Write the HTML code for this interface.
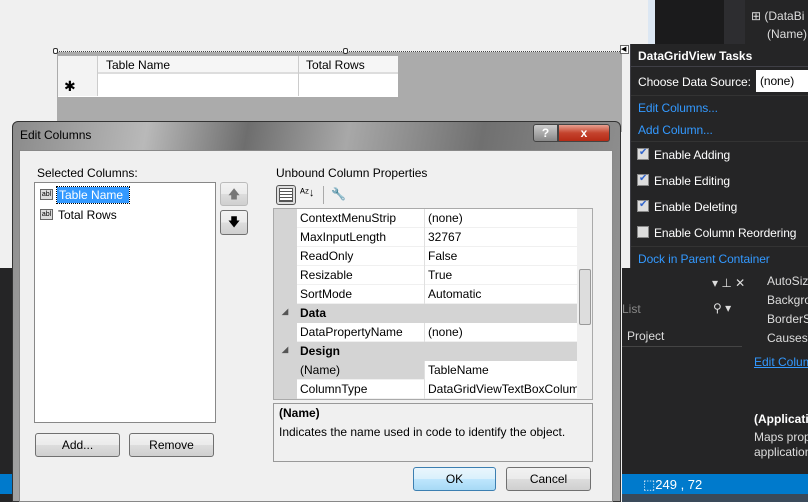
<!DOCTYPE html>
<html><head><style>
*{box-sizing:border-box;margin:0;padding:0}
body{width:808px;height:502px;overflow:hidden;position:relative;background:#f0f0f0;font-family:"Liberation Sans",sans-serif;font-size:12px;color:#000}
.a{position:absolute}
.dark{background:#1e1e1e}
.t{position:absolute;white-space:nowrap}
.btn{position:absolute;border:1px solid #707070;border-radius:3px;background:linear-gradient(#f2f2f2,#ebebeb 50%,#dddddd 51%,#cfcfcf);text-align:center;line-height:22px}
.row{position:absolute;left:23px;width:280px;height:19px;border-bottom:1px solid #f0f0f0;background:#fff}
.row span{position:absolute;top:2px}
.cat{position:absolute;left:0;width:303px;height:19px;background:#d4d4d4;font-weight:bold}
.lk{color:#3399ff}
.cb{position:absolute;left:637px;width:12px;height:12px;border:1px solid #888;background:#ddd}
.p{font-size:12px;letter-spacing:-0.1px}
</style></head><body>
<!-- designer surface -->
<div class="a" style="left:648px;top:0;width:7px;height:44px;background:#dce7f3"></div>
<div class="a" style="left:57px;top:52px;width:565px;height:80px;background:#ababab"></div>
<div class="a" style="left:55px;top:51px;width:567px;height:0;border-top:1px dotted #444"></div>
<div class="a" style="left:53px;top:48px;width:5px;height:6px;border:1px solid #333;background:#fff;border-radius:2px"></div>
<div class="a" style="left:343px;top:48px;width:5px;height:6px;border:1px solid #333;background:#fff;border-radius:2px"></div>
<div class="a" style="left:620px;top:45px;width:9px;height:9px;background:#fff;border:1px solid #666;font-size:7px;line-height:7px">◀</div>
<!-- grid -->
<div class="a" style="left:58px;top:56px;width:340px;height:41px;background:#fff"></div>
<div class="a" style="left:58px;top:56px;width:40px;height:40px;background:#f3f3f3;border-right:1px solid #ccc"></div>
<div class="a" style="left:98px;top:56px;width:300px;height:18px;background:#f6f6f6;border-bottom:2px solid #ddd"></div>
<div class="a" style="left:298px;top:56px;width:1px;height:40px;background:#ccc"></div>
<div class="t" style="left:106px;top:58px">Table Name</div>
<div class="t" style="left:306px;top:58px">Total Rows</div>
<div class="t" style="left:64px;top:78px;font-size:14px">✱</div>
<!-- right dark IDE -->
<div class="a dark" style="left:655px;top:0;width:153px;height:44px;background:#2d2d30"></div>
<div class="a" style="left:655px;top:0;width:69px;height:44px;background:#1b1b1c"></div>
<div class="a" style="left:745px;top:0;width:63px;height:44px;background:#252526"></div>
<div class="t" style="left:751px;top:9px;color:#ddd">⊞ (DataBi</div>
<div class="t" style="left:767px;top:27px;color:#ddd">(Name)</div>
<div class="a dark" style="left:622px;top:268px;width:186px;height:234px;background:#252526"></div>
<div class="a" style="left:0;top:268px;width:12px;height:234px;background:#252526"></div>
<div class="a" style="left:0;top:474px;width:12px;height:20px;background:#007acc"></div>
<div class="a" style="left:622px;top:474px;width:186px;height:20px;background:#007acc"></div>
<div class="t" style="left:643px;top:477px;color:#fff;font-size:13px">⬚249 , 72</div>
<div class="a" style="left:622px;top:494px;width:186px;height:8px;background:#3a4a5a"></div>
<div class="t" style="left:622px;top:302px;color:#888">List</div>
<div class="t" style="left:627px;top:329px;color:#ddd">Project</div>
<div class="a" style="left:622px;top:346px;width:120px;height:1px;background:#444"></div>
<div class="t" style="left:712px;top:276px;color:#ddd">▾ ⊥ ✕</div>
<div class="t" style="left:713px;top:301px;color:#ddd">⚲ ▾</div>
<div class="a" style="left:750px;top:268px;width:58px;height:80px;background:#252526"></div>
<div class="t" style="left:767px;top:274px;color:#ddd">AutoSiz</div>
<div class="t" style="left:767px;top:293px;color:#ddd">Backgro</div>
<div class="t" style="left:767px;top:312px;color:#ddd">BorderS</div>
<div class="t" style="left:767px;top:331px;color:#ddd">CausesV</div>
<div class="t lk" style="left:754px;top:355px;text-decoration:underline">Edit Colum</div>
<div class="t" style="left:754px;top:412px;color:#fff;font-weight:bold">(Applicatio</div>
<div class="t" style="left:754px;top:430px;color:#ddd">Maps prop</div>
<div class="t" style="left:754px;top:445px;color:#ddd">application</div>
<!-- tasks popup -->
<div class="a" style="left:630px;top:44px;width:178px;height:224px;background:#252526;border-left:1px solid #3f3f46"></div>
<div class="t" style="left:638px;top:49px;color:#fff;font-weight:bold;font-size:12px">DataGridView Tasks</div>
<div class="a" style="left:631px;top:66px;width:177px;height:1px;background:#3f3f46"></div>
<div class="t p" style="left:638px;top:75px;color:#fff">Choose Data Source:</div>
<div class="a" style="left:756px;top:70px;width:52px;height:22px;background:#fff"></div>
<div class="t p" style="left:760px;top:74px">(none)</div>
<div class="a" style="left:631px;top:95px;width:177px;height:1px;background:#333"></div>
<div class="t lk p" style="left:638px;top:101px">Edit Columns...</div>
<div class="t lk p" style="left:638px;top:123px">Add Column...</div>
<div class="a" style="left:631px;top:141px;width:177px;height:1px;background:#333"></div>
<div class="cb" style="top:148px"></div><div class="t" style="left:639px;top:147px;color:#36c;font-size:10px">✔</div><div class="t p" style="left:654px;top:148px;color:#fff">Enable Adding</div>
<div class="cb" style="top:174px"></div><div class="t" style="left:639px;top:173px;color:#36c;font-size:10px">✔</div><div class="t p" style="left:654px;top:174px;color:#fff">Enable Editing</div>
<div class="cb" style="top:200px"></div><div class="t" style="left:639px;top:199px;color:#36c;font-size:10px">✔</div><div class="t p" style="left:654px;top:200px;color:#fff">Enable Deleting</div>
<div class="cb" style="top:226px"></div><div class="t p" style="left:654px;top:226px;color:#fff">Enable Column Reordering</div>
<div class="a" style="left:631px;top:246px;width:177px;height:1px;background:#333"></div>
<div class="t lk p" style="left:638px;top:252px">Dock in Parent Container</div>
<!-- dialog -->
<div class="a" style="left:12px;top:121px;width:609px;height:381px;border:1px solid #333;border-radius:6px 6px 0 0;background:linear-gradient(100deg,#8a8a8a,#b9b9b9 20%,#6e6e6e 35%,#a8a8a8 50%,#707070 70%,#9a9a9a)"></div>
<div class="t" style="left:20px;top:128px;color:#000">Edit Columns</div>
<div class="a" style="left:533px;top:124px;width:25px;height:18px;border:1px solid #444;border-radius:3px 0 0 3px;background:linear-gradient(#ccc,#888);color:#fff;text-align:center;font-weight:bold;line-height:16px">?</div>
<div class="a" style="left:558px;top:124px;width:52px;height:18px;border:1px solid #444;border-radius:0 3px 3px 0;background:linear-gradient(#e8a090,#c4432d 50%,#b52a15);color:#fff;text-align:center;font-weight:bold;line-height:16px">x</div>
<div class="a" style="left:19px;top:150px;width:594px;height:352px;background:#f0f0f0;border:1px solid #888"></div>
<div class="t" style="left:37px;top:166px">Selected Columns:</div>
<div class="a" style="left:34px;top:182px;width:182px;height:241px;background:#fff;border:1px solid #888"></div>
<div class="a" style="left:40px;top:189px;width:13px;height:11px;border:1px solid #666;background:#ddd;font-size:7px;line-height:9px;text-align:center">abl</div>
<div class="a" style="left:57px;top:187px;width:72px;height:16px;background:#3399ff;outline:1px dotted #000"></div>
<div class="t" style="left:59px;top:188px;color:#fff">Table Name</div>
<div class="a" style="left:40px;top:209px;width:13px;height:11px;border:1px solid #666;background:#ddd;font-size:7px;line-height:9px;text-align:center">abl</div>
<div class="t" style="left:58px;top:208px">Total Rows</div>
<div class="btn" style="left:220px;top:182px;width:28px;height:24px;color:#777;border-color:#bbb">🡅</div>
<div class="btn" style="left:220px;top:210px;width:28px;height:25px">🡇</div>
<div class="btn" style="left:35px;top:433px;width:85px;height:24px">Add...</div>
<div class="btn" style="left:129px;top:433px;width:85px;height:24px">Remove</div>
<div class="t" style="left:276px;top:166px">Unbound Column Properties</div>
<div class="a" style="left:276px;top:185px;width:20px;height:20px;border:1px solid #555;border-radius:3px;background:#ddd"></div>
<div class="a" style="left:279px;top:188px;width:14px;height:14px;border:1px solid #555;background:repeating-linear-gradient(#fff 0 2px,#555 2px 3px)"></div>
<div class="t" style="left:300px;top:187px;font-size:11px">ᴬᶻ↓</div>
<div class="a" style="left:323px;top:186px;width:1px;height:18px;background:#aaa"></div>
<div class="t" style="left:331px;top:187px;color:#bbb">🔧</div>
<!-- property grid -->
<div class="a" style="left:273px;top:208px;width:320px;height:192px;background:#d4d4d4;border:1px solid #aaa;overflow:hidden">
<div class="row" style="top:0"><span style="left:3px">ContextMenuStrip</span><span style="left:131px">(none)</span></div>
<div class="row" style="top:19px"><span style="left:3px">MaxInputLength</span><span style="left:131px">32767</span></div>
<div class="row" style="top:38px"><span style="left:3px">ReadOnly</span><span style="left:131px">False</span></div>
<div class="row" style="top:57px"><span style="left:3px">Resizable</span><span style="left:131px">True</span></div>
<div class="row" style="top:76px"><span style="left:3px">SortMode</span><span style="left:131px">Automatic</span></div>
<div class="cat" style="top:95px"><span class="t" style="left:8px;top:3px;font-size:8px;color:#555">◢</span><span class="t" style="left:26px;top:2px">Data</span></div>
<div class="row" style="top:114px"><span style="left:3px">DataPropertyName</span><span style="left:131px">(none)</span></div>
<div class="cat" style="top:133px"><span class="t" style="left:8px;top:3px;font-size:8px;color:#555">◢</span><span class="t" style="left:26px;top:2px">Design</span></div>
<div class="row" style="top:152px;background:#d4d4d4"><span style="left:3px">(Name)</span></div>
<div class="a" style="left:151px;top:152px;width:152px;height:19px;background:#fff"><span class="t" style="left:3px;top:2px">TableName</span></div>
<div class="row" style="top:171px"><span style="left:3px">ColumnType</span><span style="left:131px">DataGridViewTextBoxColum</span></div>
<div class="a" style="left:150px;top:0;width:1px;height:95px;background:#e0e0e0"></div>
<div class="a" style="left:150px;top:114px;width:1px;height:19px;background:#e0e0e0"></div>
<div class="a" style="left:150px;top:152px;width:1px;height:40px;background:#e0e0e0"></div>
<div class="a" style="left:303px;top:0;width:16px;height:192px;background:#f0f0f0"></div>
<div class="a" style="left:305px;top:60px;width:12px;height:56px;background:#ddd;border:1px solid #999;border-radius:2px"></div>
</div>
<div class="a" style="left:273px;top:403px;width:320px;height:59px;border:1px solid #999;background:#f0f0f0"></div>
<div class="t" style="left:279px;top:406px;font-weight:bold">(Name)</div>
<div class="t" style="left:279px;top:425px">Indicates the name used in code to identify the object.</div>
<div class="btn" style="left:413px;top:467px;width:83px;height:24px;border-color:#3c7fb1;background:linear-gradient(#eaf6fd,#d9f0fc 50%,#bee6fd 51%,#a7d9f5)">OK</div>
<div class="btn" style="left:506px;top:467px;width:85px;height:24px">Cancel</div>
</body></html>
